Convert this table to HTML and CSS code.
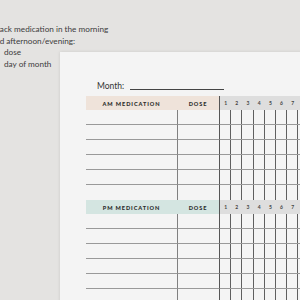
FILE: index.html
```html
<!DOCTYPE html>
<html>
<head>
<meta charset="utf-8">
<link rel="stylesheet" href="styles.css">
</head>
<body>
<div class="notes">
  <p class="l1">Track medication in the morning</p>
  <p class="l2">and afternoon/evening:</p>
  <p class="sub">dose</p>
  <p class="sub">day of month</p>
</div>
<div class="paper">
  <div class="month"><span>Month:</span><span class="month-line"></span></div>
  <div class="sheet">
    <div class="row head am"><div class="c-med">AM MEDICATION</div><div class="c-dose">DOSE</div><div class="c-days"><span>1</span><span>2</span><span>3</span><span>4</span><span>5</span><span>6</span><span>7</span></div></div>
    <div class="row"><div class="c-med"></div><div class="c-dose"></div><div class="c-days"></div></div>
    <div class="row"><div class="c-med"></div><div class="c-dose"></div><div class="c-days"></div></div>
    <div class="row"><div class="c-med"></div><div class="c-dose"></div><div class="c-days"></div></div>
    <div class="row"><div class="c-med"></div><div class="c-dose"></div><div class="c-days"></div></div>
    <div class="row"><div class="c-med"></div><div class="c-dose"></div><div class="c-days"></div></div>
    <div class="row last"><div class="c-med"></div><div class="c-dose"></div><div class="c-days"></div></div>
    <div class="row head pm"><div class="c-med">PM MEDICATION</div><div class="c-dose">DOSE</div><div class="c-days"><span>1</span><span>2</span><span>3</span><span>4</span><span>5</span><span>6</span><span>7</span></div></div>
    <div class="row"><div class="c-med"></div><div class="c-dose"></div><div class="c-days"></div></div>
    <div class="row"><div class="c-med"></div><div class="c-dose"></div><div class="c-days"></div></div>
    <div class="row"><div class="c-med"></div><div class="c-dose"></div><div class="c-days"></div></div>
    <div class="row"><div class="c-med"></div><div class="c-dose"></div><div class="c-days"></div></div>
    <div class="row"><div class="c-med"></div><div class="c-dose"></div><div class="c-days"></div></div>
    <div class="row"><div class="c-med"></div><div class="c-dose"></div><div class="c-days"></div></div>
  </div>
</div>
</body>
</html>
```
FILE: styles.css
```css
html, body {
  margin: 0;
  padding: 0;
  width: 300px;
  height: 300px;
  overflow: hidden;
  background: #e4e3e1;
  font-family: Lato, "Open Sans", sans-serif;
}
.notes {
  height: 52px;
  padding-top: 24px;
  box-sizing: border-box;
  color: #3c3c3c;
  font-size: 8.2px;
  line-height: 11.6px;
  white-space: nowrap;
}
.notes p { margin: 0; }
.notes .l1 { margin-left: -7px; }
.notes .l2 { margin-left: -9px; }
.notes .sub { margin-left: 4px; }
.paper {
  margin-left: 60px;
  width: 300px;
  height: 270px;
  background: #f4f4f4;
  box-shadow: 0 0 3px rgba(0,0,0,0.12);
  padding: 28px 0 0 26px;
  box-sizing: border-box;
}
.month {
  display: flex;
  align-items: center;
  height: 12px;
  padding-left: 11px;
  font-size: 8.5px;
  color: #333;
}
.month-line {
  width: 94px;
  margin-left: 6px;
  margin-top: 7px;
  border-bottom: 1px solid #444;
}
.sheet {
  margin-top: 4px;
  width: 240px;
}
.row {
  display: grid;
  grid-template-columns: 91px 42px 1fr;
  height: 15px;
}
.row > div {
  border-bottom: 1px solid #999;
  box-sizing: border-box;
}
.row.last > div { border-bottom: none; }
.c-dose {
  border-left: 1px solid #808080;
}
.c-days {
  border-left: 1px solid #555;
  background: repeating-linear-gradient(to right, transparent 0 10.2px, #5f5f5f 10.2px 11.2px);
}
.row.head {
  height: 14px;
}
.row.head > div {
  border-bottom: none;
  display: flex;
  align-items: center;
  justify-content: center;
  font-size: 5.6px;
  font-weight: 900;
  letter-spacing: 0.9px;
  color: #2c2c2c;
}
.row.head .c-dose { border-left: none; }
.row.am .c-med, .row.am .c-dose { background: #efe3da; }
.row.pm .c-med, .row.pm .c-dose { background: #d4e5e1; }
.row.head .c-days {
  background: #dedede;
  justify-content: flex-start;
  letter-spacing: 0;
  font-weight: 700;
  font-size: 5px;
  color: #444;
}
.row.head .c-days span {
  width: 11.2px;
  text-align: center;
  flex: none;
}
```
